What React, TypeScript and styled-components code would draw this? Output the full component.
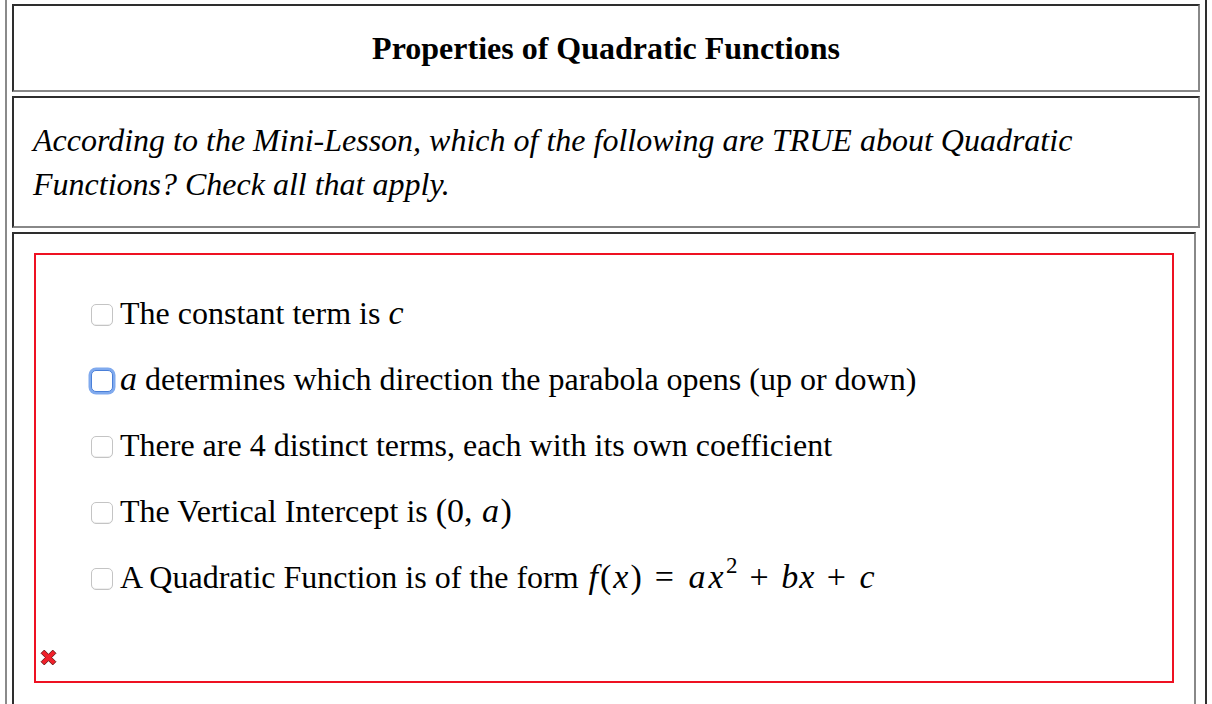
import styled, { createGlobalStyle } from "styled-components";

const GlobalStyle = createGlobalStyle`
  html, body {
    margin: 0;
    padding: 0;
    background: #fff;
  }
  body {
    font-family: "Liberation Serif", "Times New Roman", serif;
    color: #000;
  }
`;

const Page = styled.div`
  padding: 0 5px;
  height: 704px;
  overflow: hidden;
`;

const Frame = styled.div`
  border-left: 2px solid #8a8a8a;
  border-right: 2px solid #2e2e2e;
  padding: 4px 5px 0 5px;
  display: flex;
  flex-direction: column;
  gap: 4px;
  min-height: 760px;
`;

const Cell = styled.div<{ $pad: string; $narrow?: boolean }>`
  border-top: 2px solid #2e2e2e;
  border-left: 2px solid #2e2e2e;
  border-right: 2px solid #888;
  border-bottom: 2px solid #888;
  padding: ${(p) => p.$pad};
  margin-right: ${(p) => (p.$narrow ? "4px" : "0")};
`;

const Title = styled.h1`
  margin: 0;
  font-size: 32px;
  line-height: 38px;
  font-weight: bold;
  text-align: center;
`;

const Question = styled.p`
  margin: 0;
  font-size: 32px;
  line-height: 44px;
  font-style: italic;
`;

const AnswerBox = styled.div`
  border: 2px solid #ee1122;
  padding: 40px 0 15px 55px;
  display: flex;
  flex-direction: column;
`;

const Options = styled.div`
  display: flex;
  flex-direction: column;
  gap: 29px;
`;

const Option = styled.label`
  display: flex;
  align-items: center;
  height: 37px;
  font-size: 32px;
  line-height: 37px;
  white-space: nowrap;
`;

const Label = styled.span`
  display: inline-block;
  height: 37px;
`;

const Box = styled.span<{ $focused?: boolean }>`
  display: inline-block;
  box-sizing: border-box;
  width: 22px;
  height: 22px;
  margin: 3px 7px 0 0;
  border-radius: 5px;
  border: 1px solid ${(p) => (p.$focused ? "#4a7fd8" : "#c4c4c4")};
  background: #fff;
  box-shadow: ${(p) => (p.$focused ? "0 0 0 2.5px #80aaee" : "inset 0 -1px 0 #efefef")};
  flex: none;
`;

const Math = styled.span`
  font-size: 34px;
  line-height: 0;
`;

const MathVar = styled.span<{ $pad?: number }>`
  font-style: italic;
  padding: 0 ${(p) => p.$pad ?? 1.5}px;
`;

const Sym = styled.span<{ $space?: number }>`
  margin: 0 ${(p) => p.$space ?? 0}px;
`;

const Sup = styled.sup`
  font-size: 23px;
  line-height: 0;
  vertical-align: 15px;
  margin-left: 1px;
`;

const Wrong = styled.svg`
  display: block;
  width: 17px;
  height: 17px;
  margin: 53px 0 0 -51px;
`;

function CrossIcon() {
  return (
    <Wrong viewBox="0 0 16 16">
      <polygon
        points="4,1 8,5 12,1 15,4 11,8 15,12 12,15 8,11 4,15 1,12 5,8 1,4"
        fill="#f0202a"
        stroke="#5a1010"
        strokeWidth="0.8"
        strokeLinejoin="round"
      />
    </Wrong>
  );
}

export default function App() {
  return (
    <>
      <GlobalStyle />
      <Page>
        <Frame>
          <Cell $pad="23px 20px">
            <Title>Properties of Quadratic Functions</Title>
          </Cell>
          <Cell $pad="20px 19px">
            <Question>
              According to the Mini-Lesson, which of the following are TRUE about Quadratic
              Functions? Check all that apply.
            </Question>
          </Cell>
          <Cell $pad="19px 20px 48px" $narrow>
            <AnswerBox>
              <Options>
                <Option>
                  <Box />
                  <Label>
                    The constant term is <Math><MathVar $pad={0}>c</MathVar></Math>
                  </Label>
                </Option>
                <Option>
                  <Box $focused />
                  <Label>
                    <Math><MathVar $pad={0}>a</MathVar></Math> determines which direction the
                    parabola opens (up or down)
                  </Label>
                </Option>
                <Option>
                  <Box />
                  <Label>There are 4 distinct terms, each with its own coefficient</Label>
                </Option>
                <Option>
                  <Box />
                  <Label>
                    The Vertical Intercept is{" "}
                    <Math>
                      (0,<Sym $space={4} />
                      <MathVar>a</MathVar>)
                    </Math>
                  </Label>
                </Option>
                <Option>
                  <Box />
                  <Label>
                    A Quadratic Function is of the form{" "}
                    <Math>
                      <MathVar $pad={2}>f</MathVar>(<MathVar $pad={2}>x</MathVar>)
                      <Sym $space={13}>=</Sym>
                      <MathVar>a</MathVar>
                      <MathVar>x</MathVar>
                      <Sup>2</Sup>
                      <Sym $space={12}>+</Sym>
                      <MathVar $pad={0.5}>b</MathVar>
                      <MathVar $pad={0.5}>x</MathVar>
                      <Sym $space={12}>+</Sym>
                      <MathVar>c</MathVar>
                    </Math>
                  </Label>
                </Option>
              </Options>
              <CrossIcon />
            </AnswerBox>
          </Cell>
        </Frame>
      </Page>
    </>
  );
}
